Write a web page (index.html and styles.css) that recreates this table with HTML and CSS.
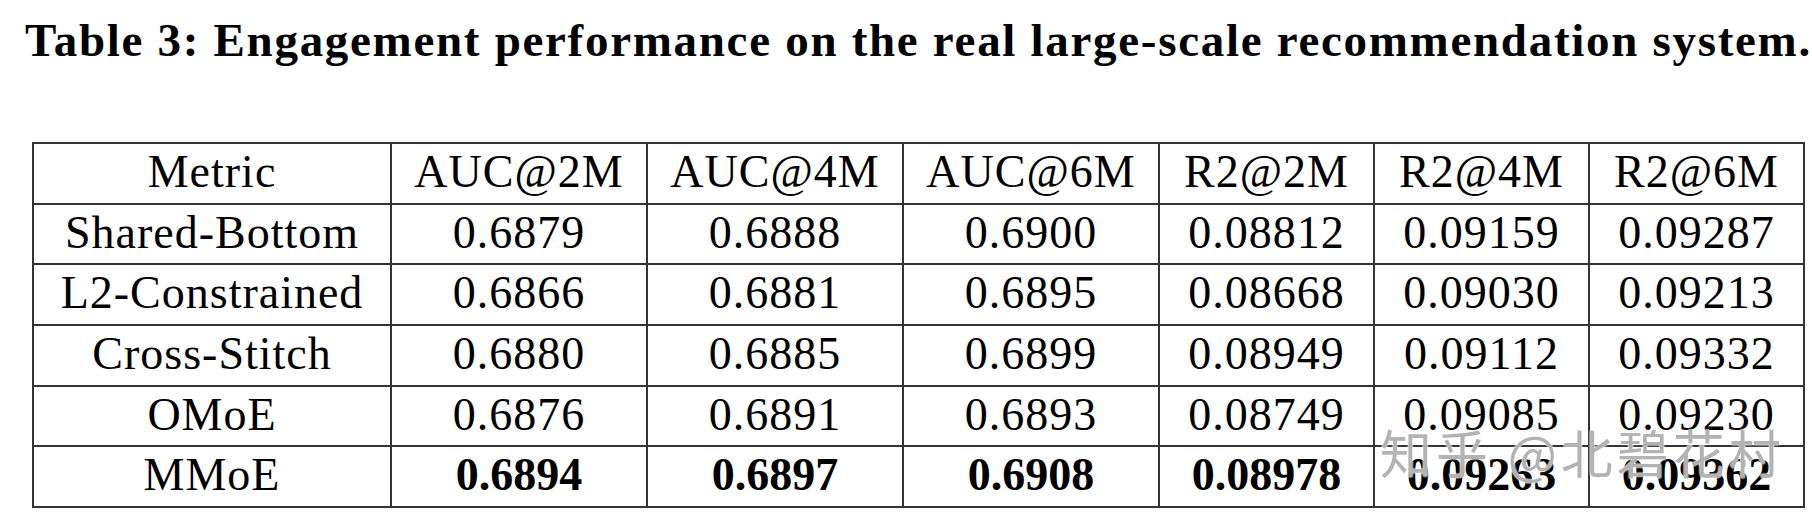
FILE: index.html
```html
<!DOCTYPE html>
<html lang="en">
<head>
  <meta charset="UTF-8" />
  <title>Table 3</title>
  <link rel="stylesheet" href="styles.css">
</head>
<body>
  <div class="page">
    <h1 class="caption">Table 3: Engagement performance on the real large-scale recommendation system.</h1>

    <div class="table-wrap">
      <table class="results">
        <colgroup>
          <col class="c-name" />
          <col class="c-auc" />
          <col class="c-auc" />
          <col class="c-auc" />
          <col class="c-r2" />
          <col class="c-r2" />
          <col class="c-r2" />
        </colgroup>
        <tr>
          <td>Metric</td>
          <td>AUC@2M</td>
          <td>AUC@4M</td>
          <td>AUC@6M</td>
          <td>R2@2M</td>
          <td>R2@4M</td>
          <td>R2@6M</td>
        </tr>
        <tr>
          <td>Shared-Bottom</td>
          <td>0.6879</td>
          <td>0.6888</td>
          <td>0.6900</td>
          <td>0.08812</td>
          <td>0.09159</td>
          <td>0.09287</td>
        </tr>
        <tr>
          <td>L2-Constrained</td>
          <td>0.6866</td>
          <td>0.6881</td>
          <td>0.6895</td>
          <td>0.08668</td>
          <td>0.09030</td>
          <td>0.09213</td>
        </tr>
        <tr>
          <td>Cross-Stitch</td>
          <td>0.6880</td>
          <td>0.6885</td>
          <td>0.6899</td>
          <td>0.08949</td>
          <td>0.09112</td>
          <td>0.09332</td>
        </tr>
        <tr>
          <td>OMoE</td>
          <td>0.6876</td>
          <td>0.6891</td>
          <td>0.6893</td>
          <td>0.08749</td>
          <td>0.09085</td>
          <td>0.09230</td>
        </tr>
        <tr class="best">
          <td>MMoE</td>
          <td>0.6894</td>
          <td>0.6897</td>
          <td>0.6908</td>
          <td>0.08978</td>
          <td>0.09263</td>
          <td>0.09362</td>
        </tr>
      </table>

      <div class="watermark">知乎 @北碧花村</div>
    </div>
  </div>
</body>
</html>
```

FILE: styles.css
```css
body {
  margin: 0;
  background: #fff;
  color: #000;
  font-family: "Liberation Serif", "Times New Roman", serif;
}

.page {
  padding: 14px 0 0 25px;
}

.caption {
  margin: 0;
  font-size: 47px;
  font-weight: bold;
  letter-spacing: 1.7px;
  line-height: 52px;
  white-space: nowrap;
}

.table-wrap {
  position: relative;
  margin: 76px 0 0 7px;
  width: 1771px;
}

.results {
  border-collapse: collapse;
  table-layout: fixed;
  width: 1771px;
}

.c-name { width: 358px; }
.c-auc { width: 256px; }
.c-r2 { width: 215px; }

.results td {
  border: 2px solid #333;
  height: 55.7px;
  padding: 0 0 3px 0;
  text-align: center;
  font-size: 46px;
  letter-spacing: 1px;
  line-height: 1;
  white-space: nowrap;
}

.results .best td + td {
  font-weight: bold;
  letter-spacing: 0;
}

.watermark {
  position: absolute;
  left: 1348px;
  top: 284px;
  font-family: "Noto Sans CJK SC", sans-serif;
  font-size: 52px;
  letter-spacing: 4px;
  line-height: 1;
  color: rgba(160, 160, 160, 0.8);
  text-shadow: 0 0 2px #fff, 0 0 2px #fff;
  white-space: nowrap;
}
```
